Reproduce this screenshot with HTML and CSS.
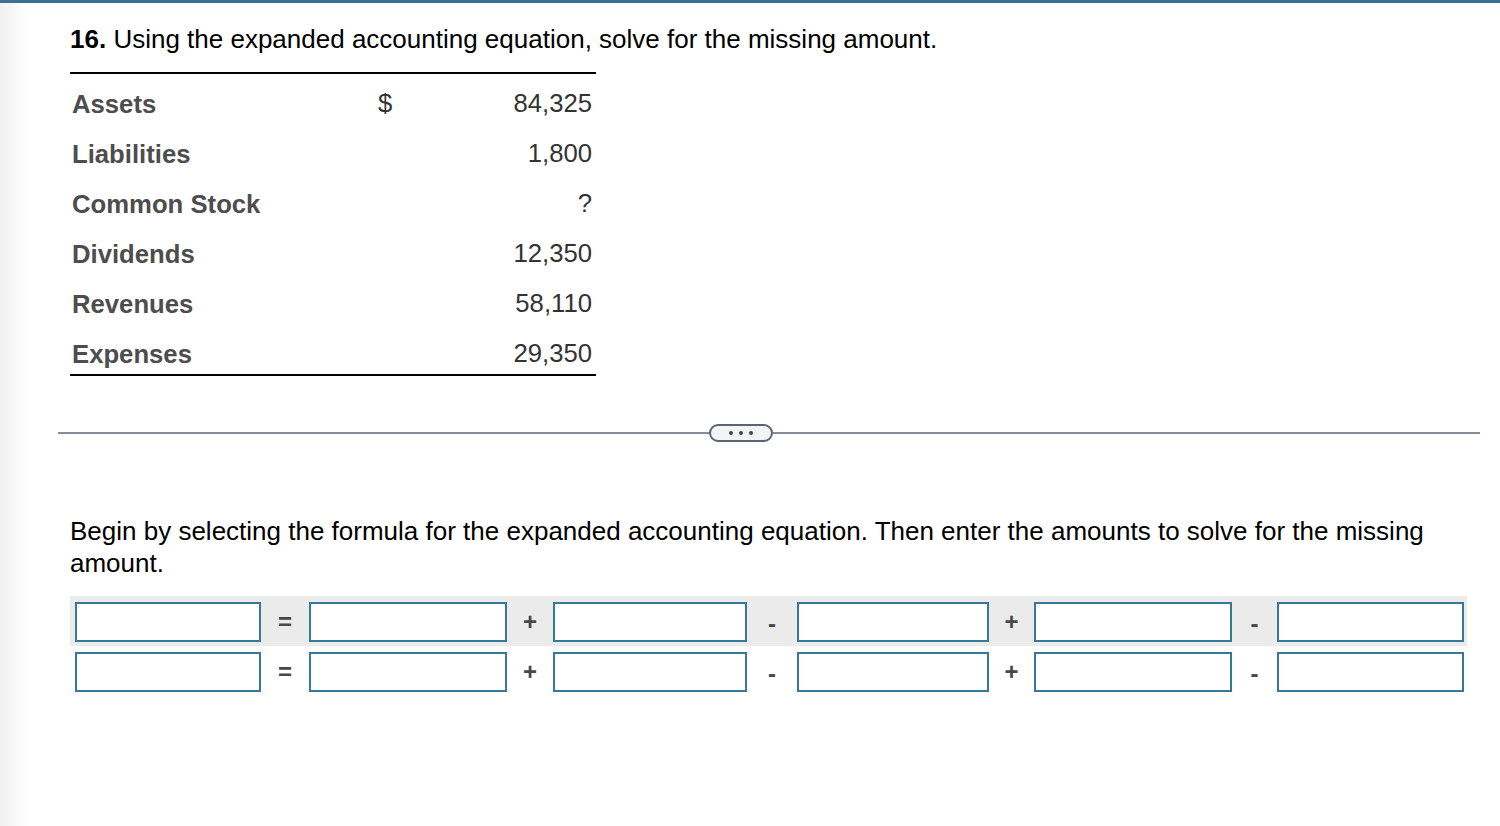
FILE: index.html
```html
<!DOCTYPE html>
<html>
<head>
<meta charset="utf-8">
<link rel="stylesheet" href="styles.css">
</head>
<body>
<div class="topbar"></div>
<div class="page">
  <div class="shadow"></div>
  <main class="content">
    <h1 class="title"><b>16.</b> Using the expanded accounting equation, solve for the missing amount.</h1>
    <div class="data">
      <div class="row"><span class="label">Assets</span><span class="cur">$</span><span class="num">84,325</span></div>
      <div class="row"><span class="label">Liabilities</span><span class="cur"></span><span class="num">1,800</span></div>
      <div class="row"><span class="label">Common Stock</span><span class="cur"></span><span class="num">?</span></div>
      <div class="row"><span class="label">Dividends</span><span class="cur"></span><span class="num">12,350</span></div>
      <div class="row"><span class="label">Revenues</span><span class="cur"></span><span class="num">58,110</span></div>
      <div class="row"><span class="label">Expenses</span><span class="cur"></span><span class="num">29,350</span></div>
    </div>
    <div class="divider">
      <span class="line left"></span>
      <span class="pill"><i></i><i></i><i></i></span>
      <span class="line"></span>
    </div>
    <p class="instr">Begin by selecting the formula for the expanded accounting equation. Then enter the amounts to solve for the missing amount.</p>
    <div class="eq">
      <div class="eqrow shaded">
        <span class="box"></span><span class="op">=</span>
        <span class="box"></span><span class="op">+</span>
        <span class="box"></span><span class="op minus">-</span>
        <span class="box"></span><span class="op">+</span>
        <span class="box"></span><span class="op minus">-</span>
        <span class="box"></span>
      </div>
      <div class="eqrow">
        <span class="box"></span><span class="op">=</span>
        <span class="box"></span><span class="op">+</span>
        <span class="box"></span><span class="op minus">-</span>
        <span class="box"></span><span class="op">+</span>
        <span class="box"></span><span class="op minus">-</span>
        <span class="box"></span>
      </div>
    </div>
  </main>
</div>
</body>
</html>
```
FILE: styles.css
```css
html, body {
  margin: 0;
  padding: 0;
  background: #fff;
  font-family: "Liberation Sans", Arial, sans-serif;
  color: #000;
}
.topbar {
  height: 3px;
  background: #3b6f96;
}
.page {
  position: relative;
  height: 823px;
  overflow: hidden;
}
.shadow {
  position: absolute;
  left: 0;
  top: 0;
  bottom: 0;
  width: 28px;
  background: linear-gradient(to right, #f1f1f1, #ffffff);
}
.content {
  position: relative;
  padding-left: 70px;
  width: 1397px;
}
.title {
  margin: 0;
  padding-top: 21px;
  font-size: 26px;
  font-weight: normal;
  line-height: 30px;
}
.title b {
  font-weight: bold;
}
.data {
  margin-top: 18px;
  width: 526px;
  border-top: 2px solid #000;
  border-bottom: 2px solid #000;
}
.row {
  display: grid;
  grid-template-columns: 306px 24px 1fr;
  height: 50px;
  box-sizing: border-box;
  padding: 10px 4px 0 2px;
  line-height: 40px;
  font-size: 25.7px;
}
.label {
  font-weight: bold;
  color: #4d4d4d;
}
.cur {
  color: #333;
  position: relative;
  top: -1px;
}
.num {
  text-align: right;
  color: #333;
  position: relative;
  top: -1px;
}
.divider {
  display: flex;
  align-items: center;
  margin: 48px 0 0 -12px;
  width: 1422px;
  height: 18px;
}
.line {
  flex: 1;
  height: 2px;
  background: #868c99;
}
.line.left {
  flex: 0 0 651px;
}
.pill {
  width: 60px;
  height: 14px;
  border: 2px solid #5b6573;
  border-radius: 9px;
  background: #f3f4f6;
  display: flex;
  align-items: center;
  justify-content: center;
  gap: 6px;
}
.pill i {
  width: 4px;
  height: 4px;
  border-radius: 50%;
  background: #3f4650;
}
.instr {
  margin: 73px 0 0 0;
  font-size: 26px;
  line-height: 32px;
  width: 1397px;
}
.eq {
  margin-top: 17px;
  width: 1397px;
}
.eqrow {
  display: grid;
  grid-template-columns: 186px 48px 198px 46px 194px 50px 192px 45px 198px 45px 187px;
  height: 50px;
  box-sizing: border-box;
  padding: 6px 3px 0 5px;
}
.eqrow + .eqrow {
  height: 48px;
}
.shaded {
  background: #ebebeb;
}
.box {
  height: 40px;
  box-sizing: border-box;
  border: 2px solid #357899;
  background: #fff;
}
.op {
  text-align: center;
  font-size: 24px;
  font-weight: bold;
  line-height: 40px;
  color: #484848;
}
.op.minus {
  position: relative;
  top: 2px;
}
```
